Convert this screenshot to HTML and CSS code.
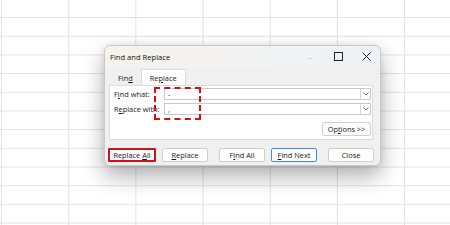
FILE: index.html
```html
<!DOCTYPE html>
<html>
<head>
<meta charset="utf-8">
<link rel="stylesheet" href="styles.css">
</head>
<body>
<div class="sheet"></div>
<div class="dialog">
  <div class="titlebar">
    <span class="title">Find and Replace</span>
    <div class="controls">
      <span class="ctl min">&#8211;</span>
      <span class="ctl max"><svg width="9" height="9" viewBox="0 0 9 9"><rect x="0.5" y="0.5" width="8" height="8" fill="none" stroke="#222" stroke-width="1"/></svg></span>
      <span class="ctl close"><svg width="9" height="9" viewBox="0 0 9 9"><path d="M0.5 0.5L8.5 8.5M8.5 0.5L0.5 8.5" stroke="#222" stroke-width="1"/></svg></span>
    </div>
  </div>
  <div class="tabs">
    <span class="tab"><span>Fin<u>d</u></span></span>
    <span class="tab active"><span>Re<u>p</u>lace</span></span>
  </div>
  <div class="panel">
    <div class="row">
      <label class="lbl">F<u>i</u>nd what:</label>
      <div class="combo"><span class="val">-</span><span class="arrow"><svg width="6" height="4" viewBox="0 0 6 4"><path d="M0.5 0.5L3 3L5.5 0.5" fill="none" stroke="#666" stroke-width="0.9"/></svg></span></div>
    </div>
    <div class="row">
      <label class="lbl">R<u>e</u>place with:</label>
      <div class="combo"><span class="val">,</span><span class="arrow"><svg width="6" height="4" viewBox="0 0 6 4"><path d="M0.5 0.5L3 3L5.5 0.5" fill="none" stroke="#666" stroke-width="0.9"/></svg></span></div>
    </div>
    <div class="optrow"><span class="btn opt"><span>Op<u>t</u>ions &gt;&gt;</span></span></div>
  </div>
  <div class="buttons">
    <span class="btn replall"><span>Replace <u>A</u>ll</span></span>
    <span class="btn"><span><u>R</u>eplace</span></span>
    <span class="btn gap"><span>F<u>i</u>nd All</span></span>
    <span class="btn def"><span><u>F</u>ind Next</span></span>
    <span class="btn gap"><span>Close</span></span>
  </div>
  <div class="mark"></div>
</div>
</body>
</html>
```
FILE: styles.css
```css
html, body {
  margin: 0;
  padding: 0;
}
body {
  width: 450px;
  height: 225px;
  overflow: hidden;
  background: #ffffff;
  font-family: "Open Sans", "Noto Sans", sans-serif;
  position: relative;
}
.sheet {
  width: 450px;
  height: 225px;
  background-image:
    linear-gradient(to right, #e2e2e2 1px, transparent 1px),
    linear-gradient(to bottom, #e2e2e2 1px, transparent 1px);
  background-size: 67.2px 100%, 100% 18.7px;
  background-position: 1px 0, 0 17px;
}
.dialog {
  position: absolute;
  left: 104px;
  top: 45px;
  width: 277px;
  height: 121px;
  box-sizing: border-box;
  border: 1px solid #c9c9cc;
  border-radius: 6px;
  background: #f0f0f0;
  box-shadow: 0 10px 22px rgba(0,0,0,0.32), 0 0 6px rgba(0,0,0,0.08);
  display: flex;
  flex-direction: column;
  font-size: 7.4px;
  color: #1a1a1a;
}
.titlebar {
  height: 21px;
  display: flex;
  align-items: center;
  justify-content: space-between;
  padding-left: 5px;
  background: linear-gradient(to right, #f6f3ec, #eef1f8);
  border-radius: 6px 6px 0 0;
}
.title {
  font-size: 7.6px;
  color: #111;
}
.controls {
  display: flex;
  align-items: center;
}
.ctl {
  width: 28px;
  display: flex;
  justify-content: center;
  align-items: center;
  height: 21px;
}
.min {
  color: #b8b8b8;
  font-size: 8px;
}
.tabs {
  display: flex;
  align-items: flex-end;
  height: 18px;
  padding-left: 5px;
}
.tab {
  padding: 0 8px;
  height: 14px;
  display: flex;
  align-items: center;
}
.tab.active {
  background: #ffffff;
  border: 1px solid #dcdcdc;
  border-bottom: none;
  height: 15px;
}
.panel {
  margin: 0 7px 0 4px;
  background: #ffffff;
  border: 1px solid #dcdcdc;
  height: 55px;
  box-sizing: border-box;
  padding: 2px 0 0 4px;
  display: flex;
  flex-direction: column;
  gap: 3px;
}
.row {
  display: flex;
  align-items: center;
  height: 12px;
}
.lbl {
  width: 50px;
}
.combo {
  flex: 1;
  margin-right: 1px;
  height: 12px;
  box-sizing: border-box;
  border: 1px solid #c8c8c8;
  display: flex;
  align-items: center;
  justify-content: space-between;
  padding-left: 3px;
}
.arrow {
  width: 10px;
  height: 10px;
  box-sizing: border-box;
  border-left: 1px solid #d6d6d6;
  display: flex;
  align-items: center;
  justify-content: center;
}
.optrow {
  display: flex;
  justify-content: flex-end;
  margin-top: 4px;
  padding-right: 1px;
}
.btn {
  height: 14px;
  box-sizing: border-box;
  border: 1px solid #d0d0d0;
  border-radius: 2px;
  background: #fdfdfd;
  display: flex;
  align-items: center;
  justify-content: center;
  width: 46px;
  white-space: nowrap;
}
.opt {
  width: 49px;
}
.buttons {
  display: flex;
  padding: 8px 0 0 3px;
  gap: 6px;
}
.btn.gap {
  margin-left: 5px;
}
.replall {
  width: 48px;
  border: 2px solid #d0101a;
  border-radius: 1px;
}
.def {
  border: 1px solid #4a8ad4;
}
.mark {
  position: absolute;
  left: 49px;
  top: 41px;
  width: 47px;
  height: 33px;
  box-sizing: border-box;
  border: 2px dashed #d01018;
}
```
